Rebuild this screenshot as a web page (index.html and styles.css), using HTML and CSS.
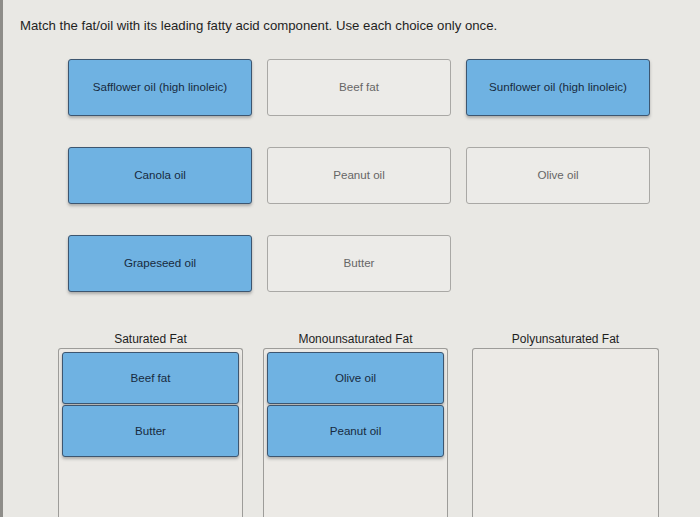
FILE: index.html
```html
<!DOCTYPE html>
<html lang="en">
<head>
<meta charset="utf-8">
<title>Match the fat/oil</title>
<link rel="stylesheet" href="styles.css">
</head>
<body>
<main class="page">
  <p class="prompt">Match the fat/oil with its leading fatty acid component. Use each choice only once.</p>

  <div class="choices">
    <div class="card card--filled">Safflower oil (high linoleic)</div>
    <div class="card card--empty">Beef fat</div>
    <div class="card card--filled">Sunflower oil (high linoleic)</div>
    <div class="card card--filled">Canola oil</div>
    <div class="card card--empty">Peanut oil</div>
    <div class="card card--empty">Olive oil</div>
    <div class="card card--filled">Grapeseed oil</div>
    <div class="card card--empty">Butter</div>
  </div>

  <div class="targets">
    <section class="target">
      <h2 class="target__title">Saturated Fat</h2>
      <div class="target__box">
        <div class="card card--filled card--stacked">Beef fat</div>
        <div class="card card--filled card--stacked">Butter</div>
      </div>
    </section>
    <section class="target">
      <h2 class="target__title">Monounsaturated Fat</h2>
      <div class="target__box">
        <div class="card card--filled card--stacked">Olive oil</div>
        <div class="card card--filled card--stacked">Peanut oil</div>
      </div>
    </section>
    <section class="target target--wide">
      <h2 class="target__title">Polyunsaturated Fat</h2>
      <div class="target__box"></div>
    </section>
  </div>
</main>
</body>
</html>
```

FILE: styles.css
```css
* {
  box-sizing: border-box;
}

html,
body {
  margin: 0;
  height: 100%;
  overflow: hidden;
}

body {
  background: #e9e8e4;
  font-family: "Liberation Sans", Arial, Helvetica, sans-serif;
  color: #222;
}

.page {
  height: 100%;
  display: flex;
  flex-direction: column;
  border-left: 3px solid #8e8d89;
  padding: 18px 0 0 17px;
}

.prompt {
  margin: 0;
  font-size: 13.2px;
  line-height: 16px;
  color: #1f1f1f;
}

/* pool of answer cards */
.choices {
  display: grid;
  grid-template-columns: repeat(3, 184px);
  grid-auto-rows: 57px;
  column-gap: 15px;
  row-gap: 31px;
  margin: 25px 0 0 48px;
}

.card {
  display: flex;
  align-items: center;
  justify-content: center;
  border-radius: 3px;
  font-size: 11.6px;
  padding-bottom: 2px;
}

.card--filled {
  background: #6fb2e2;
  border: 1px solid #3d5670;
  color: #172a3e;
  box-shadow: 0 2px 3px rgba(60, 60, 60, 0.35);
}

.card--empty {
  background: #ecebe8;
  border: 1px solid #a9a8a5;
  color: #666;
}

.targets {
  flex: 1;
  display: flex;
  gap: 20px;
  margin: 40px 0 0 38px;
}

.target {
  width: 185px;
  display: flex;
  flex-direction: column;
}

.target--wide {
  width: 187px;
  margin-left: 4px;
}

.target__title {
  margin: 0 0 2px;
  font-size: 12px;
  font-weight: normal;
  line-height: 14px;
  text-align: center;
  color: #1e1e1e;
}

.target__box {
  flex: 1;
  display: flex;
  flex-direction: column;
  gap: 1px;
  padding: 3px 3px 0;
  border: 1px solid #9d9c99;
  border-bottom: none;
  border-radius: 3px 3px 0 0;
  background: #eceae6;
}

.card--stacked {
  height: 52px;
  flex: none;
}
```
